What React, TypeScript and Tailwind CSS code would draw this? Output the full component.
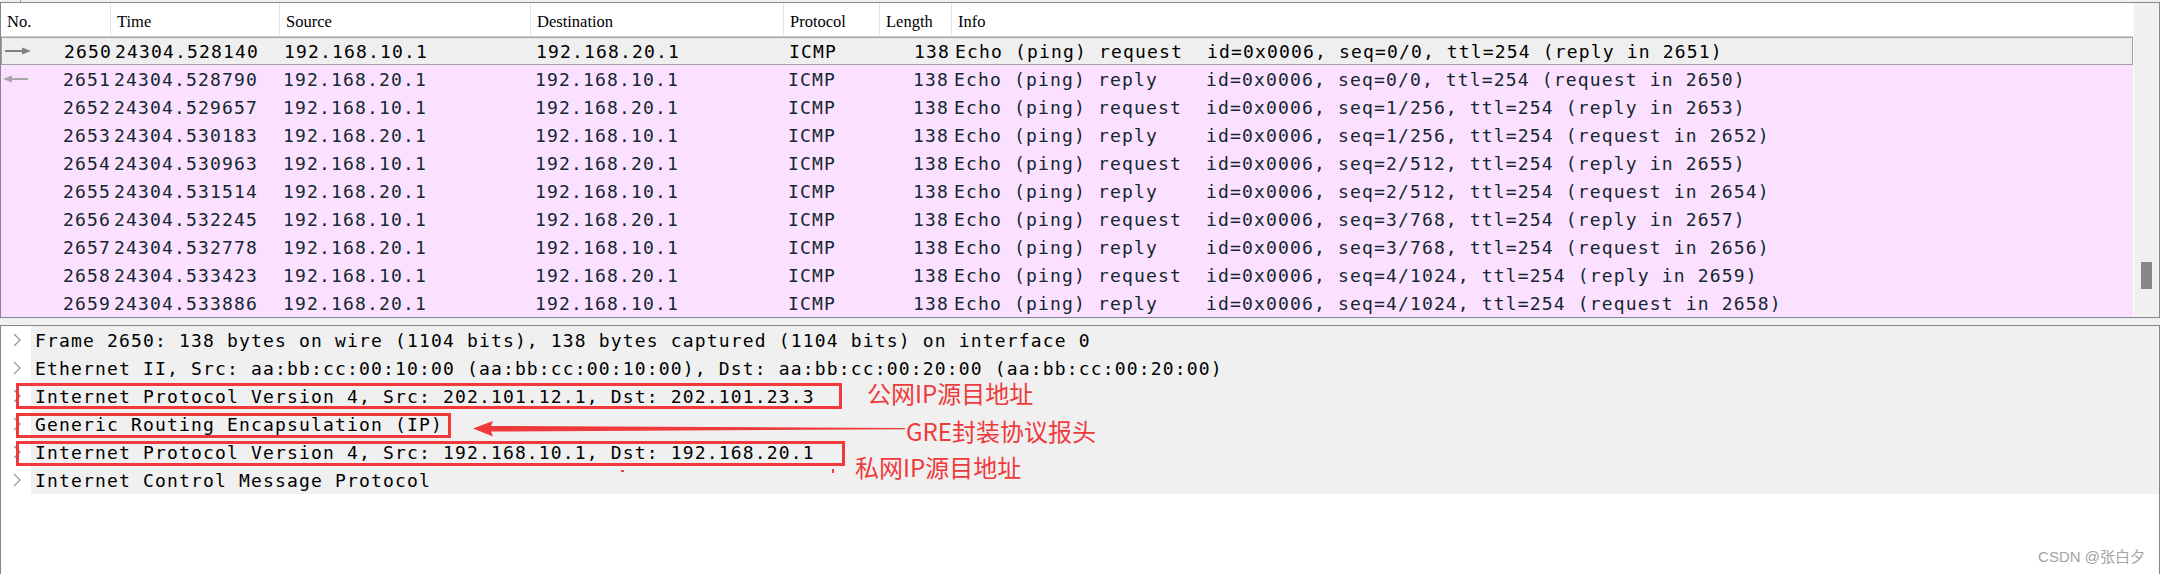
import clsx from 'clsx';

type Packet = {
  no: number;
  time: string;
  src: string;
  dst: string;
  info: string;
};

const A = '192.168.10.1';
const B = '192.168.20.1';

const packets: Packet[] = [
  { no: 2650, time: '24304.528140', src: A, dst: B, info: 'Echo (ping) request  id=0x0006, seq=0/0, ttl=254 (reply in 2651)' },
  { no: 2651, time: '24304.528790', src: B, dst: A, info: 'Echo (ping) reply    id=0x0006, seq=0/0, ttl=254 (request in 2650)' },
  { no: 2652, time: '24304.529657', src: A, dst: B, info: 'Echo (ping) request  id=0x0006, seq=1/256, ttl=254 (reply in 2653)' },
  { no: 2653, time: '24304.530183', src: B, dst: A, info: 'Echo (ping) reply    id=0x0006, seq=1/256, ttl=254 (request in 2652)' },
  { no: 2654, time: '24304.530963', src: A, dst: B, info: 'Echo (ping) request  id=0x0006, seq=2/512, ttl=254 (reply in 2655)' },
  { no: 2655, time: '24304.531514', src: B, dst: A, info: 'Echo (ping) reply    id=0x0006, seq=2/512, ttl=254 (request in 2654)' },
  { no: 2656, time: '24304.532245', src: A, dst: B, info: 'Echo (ping) request  id=0x0006, seq=3/768, ttl=254 (reply in 2657)' },
  { no: 2657, time: '24304.532778', src: B, dst: A, info: 'Echo (ping) reply    id=0x0006, seq=3/768, ttl=254 (request in 2656)' },
  { no: 2658, time: '24304.533423', src: A, dst: B, info: 'Echo (ping) request  id=0x0006, seq=4/1024, ttl=254 (reply in 2659)' },
  { no: 2659, time: '24304.533886', src: B, dst: A, info: 'Echo (ping) reply    id=0x0006, seq=4/1024, ttl=254 (request in 2658)' },
];

const details = [
  'Frame 2650: 138 bytes on wire (1104 bits), 138 bytes captured (1104 bits) on interface 0',
  'Ethernet II, Src: aa:bb:cc:00:10:00 (aa:bb:cc:00:10:00), Dst: aa:bb:cc:00:20:00 (aa:bb:cc:00:20:00)',
  'Internet Protocol Version 4, Src: 202.101.12.1, Dst: 202.101.23.3',
  'Generic Routing Encapsulation (IP)',
  'Internet Protocol Version 4, Src: 192.168.10.1, Dst: 192.168.20.1',
  'Internet Control Message Protocol',
];

const mono = "font-['DejaVu_Sans_Mono',monospace] text-[18px] tracking-[1.16px]";
const cjk = "font-['Noto_Sans_CJK_SC',sans-serif]";

const RelArrow: React.FC<{ dir: 'right' | 'left' }> = ({ dir }) =>
  dir === 'right' ? (
    <svg width="27" height="10" viewBox="0 0 27 10">
      <line x1="1" y1="5" x2="19" y2="5" stroke="#808080" strokeWidth="2" />
      <polygon points="18,1.5 27,5 18,8.5" fill="#808080" />
    </svg>
  ) : (
    <svg width="27" height="10" viewBox="0 0 27 10">
      <line x1="8" y1="5" x2="25" y2="5" stroke="#a8a8a8" strokeWidth="2" />
      <polygon points="9,1.5 0,5 9,8.5" fill="#a8a8a8" />
    </svg>
  );

const HeaderCell: React.FC<{ label: string; className: string }> = ({ label, className }) => (
  <div className={clsx('flex h-full items-center border-r border-[#e4e4e4] pt-[5px] pl-[6px]', className)}>
    {label}
  </div>
);

const PacketRow: React.FC<{ p: Packet; idx: number }> = ({ p, idx }) => (
  <div
    className={clsx(
      'flex h-[28px] items-center whitespace-pre',
      mono,
      idx === 0
        ? 'border border-[#a0a0a0] bg-[#efefef] text-black'
        : 'bg-[#fce0ff] text-[#12272e]'
    )}
  >
    <div className="flex w-[110px] items-center pl-[2px]">
      {idx === 0 && <RelArrow dir="right" />}
      {idx === 1 && <RelArrow dir="left" />}
      <span className="ml-auto">{p.no}</span>
    </div>
    <div className="w-[169px] pl-[3px]">{p.time}</div>
    <div className="w-[251px] pl-[3px]">{p.src}</div>
    <div className="w-[253px] pl-[4px]">{p.dst}</div>
    <div className="w-[96px] pl-[4px]">ICMP</div>
    <div className="w-[72px] pr-[3px] text-right">138</div>
    <div className="flex-1 pl-[2px]">{p.info}</div>
  </div>
);

const Chevron = () => (
  <svg width="10" height="14" viewBox="0 0 10 14">
    <polyline points="2,1 8,7 2,13" fill="none" stroke="#9c9c9c" strokeWidth="1.4" />
  </svg>
);

export default function App() {
  return (
    <div className="relative flex h-[574px] w-[2160px] flex-col overflow-hidden bg-[#f0f0f0]">
      {/* bottom edge of the display filter bar */}
      <div className="flex h-[2px] shrink-0">
        <div className="ml-[20px] h-full w-px bg-[#9a9a9a]" />
      </div>

      {/* packet list */}
      <div className="flex h-[316px] shrink-0 border border-[#828790]">
        <div className="flex w-[2132px] flex-col">
          <div className="flex h-[34px] border-b border-[#d0d0d0] bg-white font-['Liberation_Serif',serif] text-[16.5px] text-black">
            <HeaderCell label="No." className="w-[110px]" />
            <HeaderCell label="Time" className="w-[169px]" />
            <HeaderCell label="Source" className="w-[251px]" />
            <HeaderCell label="Destination" className="w-[253px]" />
            <HeaderCell label="Protocol" className="w-[96px]" />
            <HeaderCell label="Length" className="w-[72px]" />
            <HeaderCell label="Info" className="flex-1 border-r-0" />
          </div>
          {packets.map((p, i) => (
            <PacketRow key={p.no} p={p} idx={i} />
          ))}
        </div>
        <div className="flex-1 border-l border-[#fbfbfb] bg-[#f0f0f0] pt-[259px] pl-[7px]">
          <div className="h-[27px] w-[11px] bg-[#888888]" />
        </div>
      </div>

      {/* splitter */}
      <div className="h-[7px] shrink-0" />

      {/* packet details */}
      <div className="relative flex-1 border-t border-r border-l border-[#828790] bg-white">
        {details.map((d) => (
          <div key={d} className="flex h-[28px] items-center">
            <div className="flex w-[30px] items-center justify-center pl-[2px]">
              <Chevron />
            </div>
            <div className={clsx('flex h-full flex-1 items-center whitespace-pre bg-[#f0f0f0] pl-[4px] text-black', mono)}>
              {d}
            </div>
          </div>
        ))}
        <div className={clsx('absolute right-[14px] bottom-[6px] text-[15px] text-[#a3a3a3]', "font-['Liberation_Sans','Noto_Sans_CJK_SC',sans-serif]")}>
          CSDN @张白夕
        </div>
      </div>

      {/* red annotations drawn over the screenshot */}
      <div className="pointer-events-none absolute top-[383px] left-[16px] h-[26px] w-[826px] border-[3px] border-[#f0393b]" />
      <div className="pointer-events-none absolute top-[413px] left-[16px] h-[25px] w-[435px] border-[3px] border-[#f0393b]" />
      <div className="pointer-events-none absolute top-[441px] left-[16px] h-[25px] w-[829px] border-[3px] border-[#f0393b]" />
      <div className="pointer-events-none absolute top-[470px] left-[621px] h-[2px] w-[3px] bg-[#f0393b]" />
      <div className="pointer-events-none absolute top-[469px] left-[832px] h-[4px] w-[2px] bg-[#f0393b]" />
      <svg className="pointer-events-none absolute top-[418px] left-[470px]" width="440" height="22" viewBox="0 0 440 22">
        <polygon points="3,10.5 23,3 21,8 435,10 435,11.2 21,13.5 23,18.5" fill="#f0393b" />
      </svg>
      <div className={clsx('absolute top-[383px] left-[867px] text-[24px] leading-[20px] text-[#ef3a3c]', cjk)}>公网IP源目地址</div>
      <div className={clsx('absolute top-[421px] left-[906px] text-[24px] leading-[20px] text-[#ef3a3c]', cjk)}>GRE封装协议报头</div>
      <div className={clsx('absolute top-[457px] left-[855px] text-[24px] leading-[20px] text-[#ef3a3c]', cjk)}>私网IP源目地址</div>
    </div>
  );
}
